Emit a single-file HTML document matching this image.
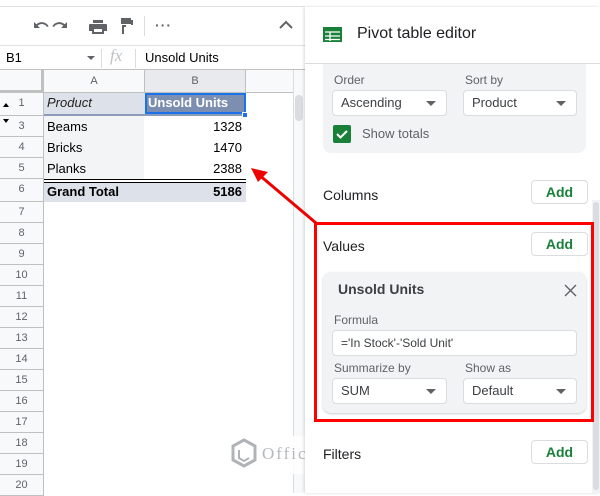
<!DOCTYPE html><html><head><style>
*{box-sizing:border-box;margin:0;padding:0}
body{width:600px;height:493px;overflow:hidden;background:#fff;font-family:"Liberation Sans",Arial,sans-serif;position:relative}
.a{position:absolute}
.rh{position:absolute;left:0;width:44px;height:21px;background:#f8f9fa;border-bottom:1px solid #c0c0c0;border-right:1px solid #c0c0c0;color:#5f6368;font-size:11px;text-align:center;line-height:20px}
.cell{position:absolute;font-size:13px;color:#000;line-height:21px}
.lbl{font-size:12px;color:#5f6368}
.sel{position:absolute;height:26px;border:1px solid #dadce0;border-radius:4px;background:#fff;font-size:13px;color:#3c4043;line-height:24px;padding-left:8px}
.dd:after{content:"";position:absolute;right:10px;top:10px;border:5px solid transparent;border-top:5px solid #5f6368}
.btn{position:absolute;width:57px;height:24px;border:1px solid #dadce0;border-radius:4px;color:#188038;font-size:14px;font-weight:bold;text-align:center;line-height:22px;background:#fff}
.h{position:absolute;font-size:14px;color:#202124}
</style></head><body>
<div class="a" style="left:0;top:0;width:305px;height:7px;border-bottom:1px solid #e0e0e0"></div>
<svg class="a" style="left:30px;top:14px" width="110" height="24" viewBox="0 0 110 24" fill="#5f6368">
<path d="M4 8v6h6l-2.3-2.3A6 6 0 0 1 17 13l1.6-.8A7.8 7.8 0 0 0 6.3 10.3z"/>
<path d="M37 8v6h-6l2.3-2.3A6 6 0 0 0 24 13l-1.6-.8A7.8 7.8 0 0 1 34.7 10.3z"/>
<path d="M63 6h10v3h-10zM60 10h16a1 1 0 0 1 1 1v6h-3v3h-12v-3h-3v-6a1 1 0 0 1 1-1zM64 15v3h8v-3z"/>
<path d="M91 4h10v6h-10zM101 6h2v5h-7v2h-2v7h-2v-9h9z"/>
</svg>
<div class="a" style="left:144px;top:16px;width:1px;height:20px;background:#dadce0"></div>
<div class="a" style="left:155px;top:17px;font-size:14px;color:#5f6368;letter-spacing:1px;font-weight:bold">···</div>
<svg class="a" style="left:279px;top:20px" width="14" height="10"><path d="M1 8l6-6 6 6" stroke="#5f6368" stroke-width="2" fill="none"/></svg>
<div class="a" style="left:0;top:45px;width:305px;height:1px;background:#e0e0e0"></div>
<div class="a" style="left:6px;top:50px;font-size:13px;color:#000">B1</div>
<div class="a" style="left:87px;top:56px;border:4px solid transparent;border-top:4px solid #5f6368"></div>
<div class="a" style="left:101px;top:49px;width:1px;height:19px;background:#dadce0"></div>
<div class="a" style="left:110px;top:46px;font-size:17px;font-style:italic;color:#bdc1c6;font-family:'Liberation Serif',serif">fx</div>
<div class="a" style="left:135px;top:49px;width:1px;height:19px;background:#dadce0"></div>
<div class="a" style="left:145px;top:50px;font-size:13px;color:#000">Unsold Units</div>
<div class="a" style="left:0;top:69px;width:305px;height:1px;background:#c0c0c0"></div>
<div class="a" style="left:0;top:70px;width:44px;height:23px;background:#f8f9fa;border-right:3px solid #c0c0c0;border-bottom:3px solid #c0c0c0"></div>
<div class="a" style="left:44px;top:70px;width:101px;height:23px;background:#f8f9fa;border-right:1px solid #c0c0c0;border-bottom:1px solid #c0c0c0;text-align:center;font-size:11px;color:#5f6368;line-height:22px">A</div>
<div class="a" style="left:145px;top:70px;width:101px;height:23px;background:#e8eaed;border-right:1px solid #c0c0c0;border-bottom:1px solid #c0c0c0;text-align:center;font-size:11px;color:#5f6368;line-height:22px">B</div>
<div class="a" style="left:246px;top:70px;width:47px;height:23px;background:#f8f9fa;border-bottom:1px solid #c0c0c0"></div>
<div class="a" style="left:293px;top:70px;width:12px;height:423px;background:#f8f9fa;border-left:1px solid #dadce0"></div>
<div class="a" style="left:295px;top:95px;width:8px;height:26px;background:#dadce0;border-radius:4px"></div>
<div class="rh" style="top:93px;height:23px">1</div>
<div class="rh" style="top:116px">3</div>
<div class="a" style="left:3px;top:100px;border:3px solid transparent;border-bottom:4px solid #000"></div>
<div class="a" style="left:3px;top:119px;border:3px solid transparent;border-top:4px solid #000"></div>
<div class="rh" style="top:137px">4</div>
<div class="rh" style="top:158px">5</div>
<div class="rh" style="top:179px;height:23px">6</div>
<div class="rh" style="top:202px">7</div><div class="rh" style="top:223px">8</div><div class="rh" style="top:244px">9</div><div class="rh" style="top:265px">10</div><div class="rh" style="top:286px">11</div><div class="rh" style="top:307px">12</div><div class="rh" style="top:328px">13</div><div class="rh" style="top:349px">14</div><div class="rh" style="top:370px">15</div><div class="rh" style="top:391px">16</div><div class="rh" style="top:412px">17</div><div class="rh" style="top:433px">18</div><div class="rh" style="top:454px">19</div><div class="rh" style="top:475px">20</div>
<div class="a" style="left:44px;top:93px;width:101px;height:21px;background:#dde1ea"></div>
<div class="a" style="left:44px;top:114px;width:202px;height:2px;background:#8c9cb8"></div>
<div class="a" style="left:145px;top:93px;width:101px;height:21px;background:#7d8fb0;border:2px solid #1a73e8"></div>
<div class="a" style="left:242px;top:112px;width:6px;height:6px;background:#1a73e8;border:1px solid #fff"></div>
<div class="cell" style="left:47px;top:92px;font-style:italic;color:#222">Product</div>
<div class="cell" style="left:148px;top:92px;color:#fff;font-weight:bold">Unsold Units</div>
<div class="a" style="left:44px;top:116px;width:100px;height:63px;background:#f3f4f6"></div>
<div class="cell" style="left:47px;top:116px">Beams</div><div class="cell" style="left:145px;top:116px;width:97px;text-align:right">1328</div>
<div class="cell" style="left:47px;top:137px">Bricks</div><div class="cell" style="left:145px;top:137px;width:97px;text-align:right">1470</div>
<div class="cell" style="left:47px;top:158px">Planks</div><div class="cell" style="left:145px;top:158px;width:97px;text-align:right">2388</div>
<div class="a" style="left:44px;top:179px;width:202px;height:4px;border-top:1px solid #000;border-bottom:1px solid #000"></div>
<div class="a" style="left:44px;top:183px;width:202px;height:19px;background:#dde1ea"></div>
<div class="cell" style="left:47px;top:181px;font-weight:bold">Grand Total</div><div class="cell" style="left:145px;top:181px;width:97px;text-align:right;font-weight:bold">5186</div>
<div class="a" style="left:228px;top:436px;width:140px;height:38px;background:rgba(255,255,255,.85)"></div>
<svg class="a" style="left:230px;top:438px" width="28" height="32"><path d="M14 2l11 6v14l-11 6-11-6V8z" fill="none" stroke="#b0b4b8" stroke-width="3"/><path d="M9 12v8l5 3 5-3" fill="none" stroke="#b0b4b8" stroke-width="2"/></svg>
<div class="a" style="left:262px;top:444px;font-family:'Liberation Serif',serif;font-size:17px;color:#b5b8bc;letter-spacing:2px">Office</div>
<div class="a" style="left:305px;top:7px;width:295px;height:486px;background:#fff;box-shadow:-1px 0 3px rgba(0,0,0,.15)"></div>
<svg class="a" style="left:323px;top:27px" width="20" height="16"><rect width="19" height="15" fill="#188038"/><path d="M2 5h15M2 9h15M2 12.5h15M7 5v9" stroke="#fff" stroke-width="1.3"/></svg>
<div class="a" style="left:357px;top:25px;font-size:16px;color:#202124">Pivot table editor</div>
<div class="a" style="left:305px;top:63px;width:295px;height:1px;background:#dadce0"></div>
<div class="a" style="left:323px;top:64px;width:263px;height:89px;background:#f1f3f4;border-radius:0 0 8px 8px"></div>
<div class="a lbl" style="left:334px;top:73px">Order</div>
<div class="a lbl" style="left:465px;top:73px">Sort by</div>
<div class="sel dd" style="left:332px;top:90px;width:115px">Ascending</div>
<div class="sel dd" style="left:463px;top:90px;width:114px">Product</div>
<div class="a" style="left:333px;top:125px;width:18px;height:18px;background:#188038;border-radius:2px"></div>
<svg class="a" style="left:333px;top:125px" width="18" height="18"><path d="M4 9l3.5 3.5L14 6" stroke="#fff" stroke-width="2" fill="none"/></svg>
<div class="a" style="left:362px;top:126px;font-size:13px;color:#5f6368">Show totals</div>
<div class="h" style="left:323px;top:187px">Columns</div>
<div class="btn" style="left:531px;top:180px">Add</div>
<div class="a" style="left:592px;top:200px;width:8px;height:293px;background:#f1f3f4"></div>
<div class="a" style="left:593px;top:202px;width:6px;height:288px;background:#dadce0;border-radius:3px"></div>
<div class="h" style="left:323px;top:238px">Values</div>
<div class="btn" style="left:531px;top:232px">Add</div>
<div class="a" style="left:323px;top:272px;width:263px;height:141px;background:#f1f3f4;border-radius:8px;box-shadow:0 1px 2px rgba(0,0,0,.2)"></div>
<div class="a" style="left:338px;top:281px;font-size:14px;font-weight:bold;color:#3c4043">Unsold Units</div>
<svg class="a" style="left:564px;top:284px" width="13" height="13"><path d="M1 1l11 11M12 1L1 12" stroke="#5f6368" stroke-width="1.4"/></svg>
<div class="a lbl" style="left:334px;top:313px">Formula</div>
<div class="sel" style="left:332px;top:330px;width:245px;padding-left:8px;font-size:12px">='In Stock'-'Sold Unit'</div>
<div class="a lbl" style="left:334px;top:361px">Summarize by</div>
<div class="a lbl" style="left:465px;top:361px">Show as</div>
<div class="sel dd" style="left:332px;top:378px;width:115px">SUM</div>
<div class="sel dd" style="left:463px;top:378px;width:114px">Default</div>
<div class="a" style="left:314px;top:222px;width:280px;height:200px;border:3px solid #ff0000"></div>
<div class="h" style="left:323px;top:446px">Filters</div>
<div class="btn" style="left:531px;top:440px">Add</div>
<svg class="a" style="left:248px;top:166px" width="72" height="62"><path d="M68 57L10 8" stroke="#e00" stroke-width="3"/><path d="M3 2l17 4-10 10z" fill="#e00"/></svg>
</body></html>
